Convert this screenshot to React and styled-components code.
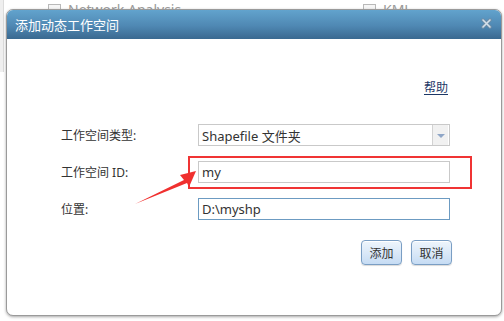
import React from "react";
import styled, { createGlobalStyle } from "styled-components";

const GlobalStyle = createGlobalStyle`
  html, body {
    margin: 0;
    padding: 0;
    background: #ffffff;
  }
  body {
    font-family: "Noto Sans", "Noto Sans CJK SC", sans-serif;
  }
`;

const Page = styled.div`
  position: relative;
  width: 504px;
  height: 321px;
  overflow: hidden;
  background: #ffffff;
`;

const Backdrop = styled.div`
  display: flex;
  height: 100%;
`;

const SideStripe = styled.div`
  width: 3px;
  height: 72px;
  background: #efefef;
  border-right: 1px solid #dcdcdc;
`;

const LayerList = styled.div`
  display: grid;
  grid-template-columns: 315px 120px;
  padding: 3px 0 0 44px;
  align-self: flex-start;
`;

const LayerItem = styled.div`
  display: flex;
  align-items: center;
  gap: 7px;
  color: #9a9a9a;
  font-size: 14px;
  line-height: 14px;
`;

const CheckBox = styled.span`
  width: 11px;
  height: 11px;
  border: 1px solid #b9b9b9;
  background: #f6f6f6;
`;

const Dialog = styled.div`
  position: absolute;
  left: 6px;
  top: 9px;
  width: 494px;
  height: 305px;
  display: flex;
  flex-direction: column;
  background: #ffffff;
  border: 1px solid #9a9a9a;
  border-radius: 7px;
  box-shadow: 0 1px 3px rgba(0, 0, 0, 0.35);
  overflow: hidden;
`;

const TitleBar = styled.div`
  height: 29px;
  display: flex;
  align-items: center;
  justify-content: space-between;
  padding: 0 9px 0 8px;
  background: linear-gradient(to bottom, #62a3cd 0%, #4f88b3 55%, #3a6990 100%);
`;

const Title = styled.span`
  color: #ffffff;
  font-family: "Noto Sans CJK SC", sans-serif;
  font-size: 13px;
`;

const CloseIcon = styled.svg`
  width: 11px;
  height: 11px;
  margin-top: -2px;
`;

const Body = styled.div`
  position: relative;
  flex: 1;
  display: flex;
  flex-direction: column;
  padding: 39px 53px 0 54px;
  font-size: 12px;
  color: #333333;
`;

const HelpRow = styled.div`
  display: flex;
  justify-content: flex-end;
  height: 16px;
`;

const HelpLink = styled.a`
  color: #1c3766;
  font-family: "Noto Sans CJK SC", sans-serif;
  font-size: 12px;
  text-decoration: underline;
  text-underline-offset: 2px;
`;

const Form = styled.div`
  display: grid;
  grid-template-columns: 137px 252px;
  row-gap: 15px;
  margin-top: 30px;
  align-items: center;
`;

const Label = styled.span`
  font-size: 12px;
  color: #333333;
`;

const Field = styled.div`
  height: 22px;
  box-sizing: border-box;
  display: flex;
  align-items: center;
  border: 1px solid ${({ $focus }) => ($focus ? "#6c9bc2" : "#c9c9c9")};
  background: #ffffff;
  font-size: 13px;
  color: #333333;
`;

const FieldText = styled.span`
  flex: 1;
  padding-left: 3px;
`;

const DropButton = styled.span`
  width: 17px;
  height: 100%;
  display: flex;
  align-items: center;
  justify-content: center;
  background: #f1f1f1;
  border-left: 1px solid #d2d2d2;
  border-right: 1px solid #ffffff;
  box-sizing: border-box;
`;

const Caret = styled.span`
  width: 0;
  height: 0;
  border-left: 4px solid transparent;
  border-right: 4px solid transparent;
  border-top: 4px solid #8fa6c7;
  margin-top: 1px;
`;

const Actions = styled.div`
  display: flex;
  justify-content: flex-end;
  gap: 9px;
  margin-top: 20px;
  margin-right: -4px;
`;

const Button = styled.button`
  width: 41px;
  height: 25px;
  padding: 0;
  border: 1px solid #7a9ec4;
  border-radius: 4px;
  background: linear-gradient(to bottom, #eef5fc 0%, #dbe9f8 50%, #c6dcf4 100%);
  box-shadow: 0 1px 1px rgba(0, 0, 0, 0.15), inset 0 1px 0 #ffffff;
  color: #333333;
  font-family: "Noto Sans CJK SC", sans-serif;
  font-size: 12px;
`;

const Highlight = styled.div`
  position: absolute;
  left: 181px;
  top: 117px;
  width: 280px;
  height: 29px;
  border: 2px solid #f03434;
`;

const Annotation = styled.svg`
  position: absolute;
  left: 0;
  top: 0;
  width: 504px;
  height: 321px;
  pointer-events: none;
`;

export default function App() {
  return (
    <>
      <GlobalStyle />
      <Page>
        <Backdrop>
          <SideStripe />
          <LayerList>
            <LayerItem>
              <CheckBox />
              Network Analysis
            </LayerItem>
            <LayerItem>
              <CheckBox />
              KML
            </LayerItem>
          </LayerList>
        </Backdrop>

        <Dialog>
          <TitleBar>
            <Title>添加动态工作空间</Title>
            <CloseIcon viewBox="0 0 11 11">
              <path d="M2 2 L9 9 M9 2 L2 9" stroke="#6f8da6" strokeWidth="3.4" strokeLinecap="round" />
              <path d="M2 2 L9 9 M9 2 L2 9" stroke="#d4e0ea" strokeWidth="1.6" strokeLinecap="round" />
            </CloseIcon>
          </TitleBar>
          <Body>
            <HelpRow>
              <HelpLink>帮助</HelpLink>
            </HelpRow>
            <Form>
              <Label>工作空间类型:</Label>
              <Field>
                <FieldText>Shapefile 文件夹</FieldText>
                <DropButton>
                  <Caret />
                </DropButton>
              </Field>
              <Label>工作空间 ID:</Label>
              <Field>
                <FieldText>my</FieldText>
              </Field>
              <Label>位置:</Label>
              <Field $focus>
                <FieldText>D:\myshp</FieldText>
              </Field>
            </Form>
            <Actions>
              <Button>添加</Button>
              <Button>取消</Button>
            </Actions>
            <Highlight />
          </Body>
        </Dialog>

        <Annotation viewBox="0 0 504 321">
          <polygon
            points="196,171 180,175 184,180 135,204 187,183 189,187"
            fill="#f0302f"
          />
        </Annotation>
      </Page>
    </>
  );
}
